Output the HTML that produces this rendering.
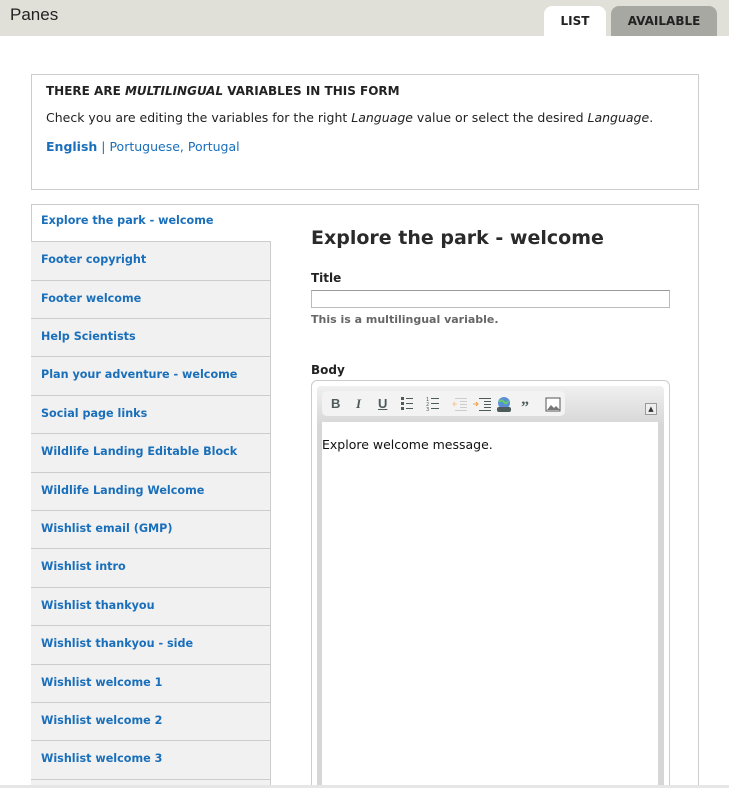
<!DOCTYPE html>
<html style="height:788px;overflow:hidden"><head><style>
*{margin:0;padding:0;box-sizing:border-box}
body{width:729px;height:788px;overflow:hidden;background:#fff;font-family:"DejaVu Sans","Liberation Sans",sans-serif;position:relative;color:#333}
.a{position:absolute}
.hdr{left:0;top:0;width:729px;height:36px;background:#e0dfd8}
.item{position:absolute;left:31px;width:240px;background:#f1f1f1;border-top:1px solid #ccc;border-right:1px solid #ccc;font-size:11.2px;font-weight:bold;color:#1a6fbb;padding-left:10px}
</style></head><body>
<div class="a hdr"></div>
<div class="a" style="left:10px;top:5px;font-size:17px;color:#222;font-family:'Liberation Sans',sans-serif">Panes</div>
<div class="a" style="left:544px;top:6px;width:62px;height:31px;background:#fff;border-radius:8px 8px 0 0;font-size:12px;font-weight:bold;color:#222;text-align:center;line-height:31px">LIST</div>
<div class="a" style="left:611px;top:6px;width:106px;height:30px;background:#a8a8a3;border-radius:8px 8px 0 0;font-size:12px;font-weight:bold;color:#222;text-align:center;line-height:30px">AVAILABLE</div>

<div class="a" style="left:31px;top:74px;width:668px;height:116px;border:1px solid #ccc"></div>
<div class="a" style="left:46px;top:84px;font-size:12px;font-weight:bold;color:#222">THERE ARE <i>MULTILINGUAL</i> VARIABLES IN THIS FORM</div>
<div class="a" style="left:46px;top:110px;font-size:12.5px;color:#222">Check you are editing the variables for the right <i>Language</i> value or select the desired <i>Language</i>.</div>
<div class="a" style="left:46px;top:139px;font-size:12.5px;color:#1a6fbb"><b>English</b> | Portuguese, Portugal</div>

<div class="a" style="left:31px;top:204px;width:668px;height:590px;border:1px solid #ccc"></div>
<div class="a" style="left:41px;top:214px;font-size:11.2px;font-weight:bold;color:#1a6fbb">Explore the park - welcome</div>
<div class="item" style="top:241px;height:39px;line-height:36px">Footer copyright</div>
<div class="item" style="top:280px;height:38px;line-height:35px">Footer welcome</div>
<div class="item" style="top:318px;height:38px;line-height:35px">Help Scientists</div>
<div class="item" style="top:356px;height:39px;line-height:35px">Plan your adventure - welcome</div>
<div class="item" style="top:395px;height:38px;line-height:35px">Social page links</div>
<div class="item" style="top:433px;height:39px;line-height:35px">Wildlife Landing Editable Block</div>
<div class="item" style="top:472px;height:38px;line-height:35px">Wildlife Landing Welcome</div>
<div class="item" style="top:510px;height:38px;line-height:35px">Wishlist email (GMP)</div>
<div class="item" style="top:548px;height:39px;line-height:35px">Wishlist intro</div>
<div class="item" style="top:587px;height:38px;line-height:35px">Wishlist thankyou</div>
<div class="item" style="top:625px;height:39px;line-height:35px">Wishlist thankyou - side</div>
<div class="item" style="top:664px;height:38px;line-height:35px">Wishlist welcome 1</div>
<div class="item" style="top:702px;height:38px;line-height:35px">Wishlist welcome 2</div>
<div class="item" style="top:740px;height:39px;line-height:35px">Wishlist welcome 3</div>
<div class="item" style="top:779px;height:10px"></div>

<div class="a" style="left:311px;top:227px;font-size:19px;font-weight:bold;color:#2a2a2a">Explore the park - welcome</div>
<div class="a" style="left:311px;top:271px;font-size:12px;font-weight:bold;color:#222">Title</div>
<div class="a" style="left:311px;top:290px;width:359px;height:18px;border:1px solid #bbb;border-top-color:#999"></div>
<div class="a" style="left:311px;top:313px;font-size:11px;font-weight:bold;color:#666">This is a multilingual variable.</div>
<div class="a" style="left:311px;top:363px;font-size:12px;font-weight:bold;color:#222">Body</div>

<div class="a" style="left:311px;top:380px;width:359px;height:420px;border:1px solid #ccc;border-radius:6px"></div>
<div class="a" style="left:317px;top:386px;width:347px;height:410px;background:linear-gradient(#f0f0f0,#d6d6d6 40px,#d6d6d6);border-radius:4px 4px 0 0"></div>
<div class="a" style="left:322px;top:422px;width:336px;height:380px;background:#fff"></div>
<div class="a" style="left:322px;top:391px;width:243px;height:25px;background:#f3f3f3;border-radius:5px"></div>
<div class="a" style="left:331px;top:396px;font-size:13px;font-weight:bold;color:#4d5b5b;font-family:'Liberation Sans',sans-serif">
<span style="position:absolute;left:0">B</span><span style="position:absolute;left:25px;font-style:italic;font-family:'Liberation Serif',serif">I</span><span style="position:absolute;left:47px;text-decoration:underline">U</span></div>
<svg class="a" style="left:400px;top:396px" width="165" height="18" viewBox="0 0 165 18">
<g fill="#4d5b5b"><rect x="1" y="1" width="3" height="3"/><rect x="1" y="6" width="3" height="3"/><rect x="1" y="11" width="3" height="3"/><rect x="6" y="2" width="7" height="1"/><rect x="6" y="7" width="7" height="1"/><rect x="6" y="12" width="7" height="1"/>
<rect x="31" y="2" width="8" height="1"/><rect x="31" y="7" width="8" height="1"/><rect x="31" y="12" width="8" height="1"/>
<text x="26" y="5" font-size="5">1</text><text x="26" y="10" font-size="5">2</text><text x="26" y="15" font-size="5">3</text>
<rect x="79" y="2" width="12" height="1"/><rect x="84" y="5" width="7" height="1"/><rect x="84" y="8" width="7" height="1"/><rect x="84" y="11" width="7" height="1"/><rect x="79" y="14" width="12" height="1"/>
<text x="121" y="16" font-size="16" font-weight="bold" font-family="Liberation Serif">”</text>
</g>
<g fill="#ccc"><rect x="55" y="2" width="12" height="1"/><rect x="60" y="5" width="7" height="1"/><rect x="60" y="8" width="7" height="1"/><rect x="60" y="11" width="7" height="1"/><rect x="55" y="14" width="12" height="1"/></g>
<path d="M57 8h-3M55 6l-2 2 2 2" stroke="#f3c89a" fill="none"/>
<path d="M73 8h5M76 6l2 2-2 2" stroke="#f0a040" fill="none"/>
<circle cx="104" cy="7" r="6" fill="#5a8fd8"/><path d="M99 6q3-3 5 0t4-1" stroke="#6c6" stroke-width="2" fill="none"/>
<rect x="97" y="11" width="14" height="5" rx="2" fill="#4d5b5b"/>
<rect x="146" y="2" width="14" height="13" fill="#fff" stroke="#555"/><path d="M147 14l4-5 3 3 2-2 4 4z" fill="#777"/>
</svg>
<div class="a" style="left:645px;top:403px;width:12px;height:12px;border:1px solid #999;background:#eee;font-size:7px;text-align:center;line-height:11px">▲</div>
<div class="a" style="left:322px;top:437px;font-size:12.5px;color:#111">Explore welcome message.</div>
<div class="a" style="left:0;top:785px;width:729px;height:3px;background:#e6e6e6"></div>
</body></html>
